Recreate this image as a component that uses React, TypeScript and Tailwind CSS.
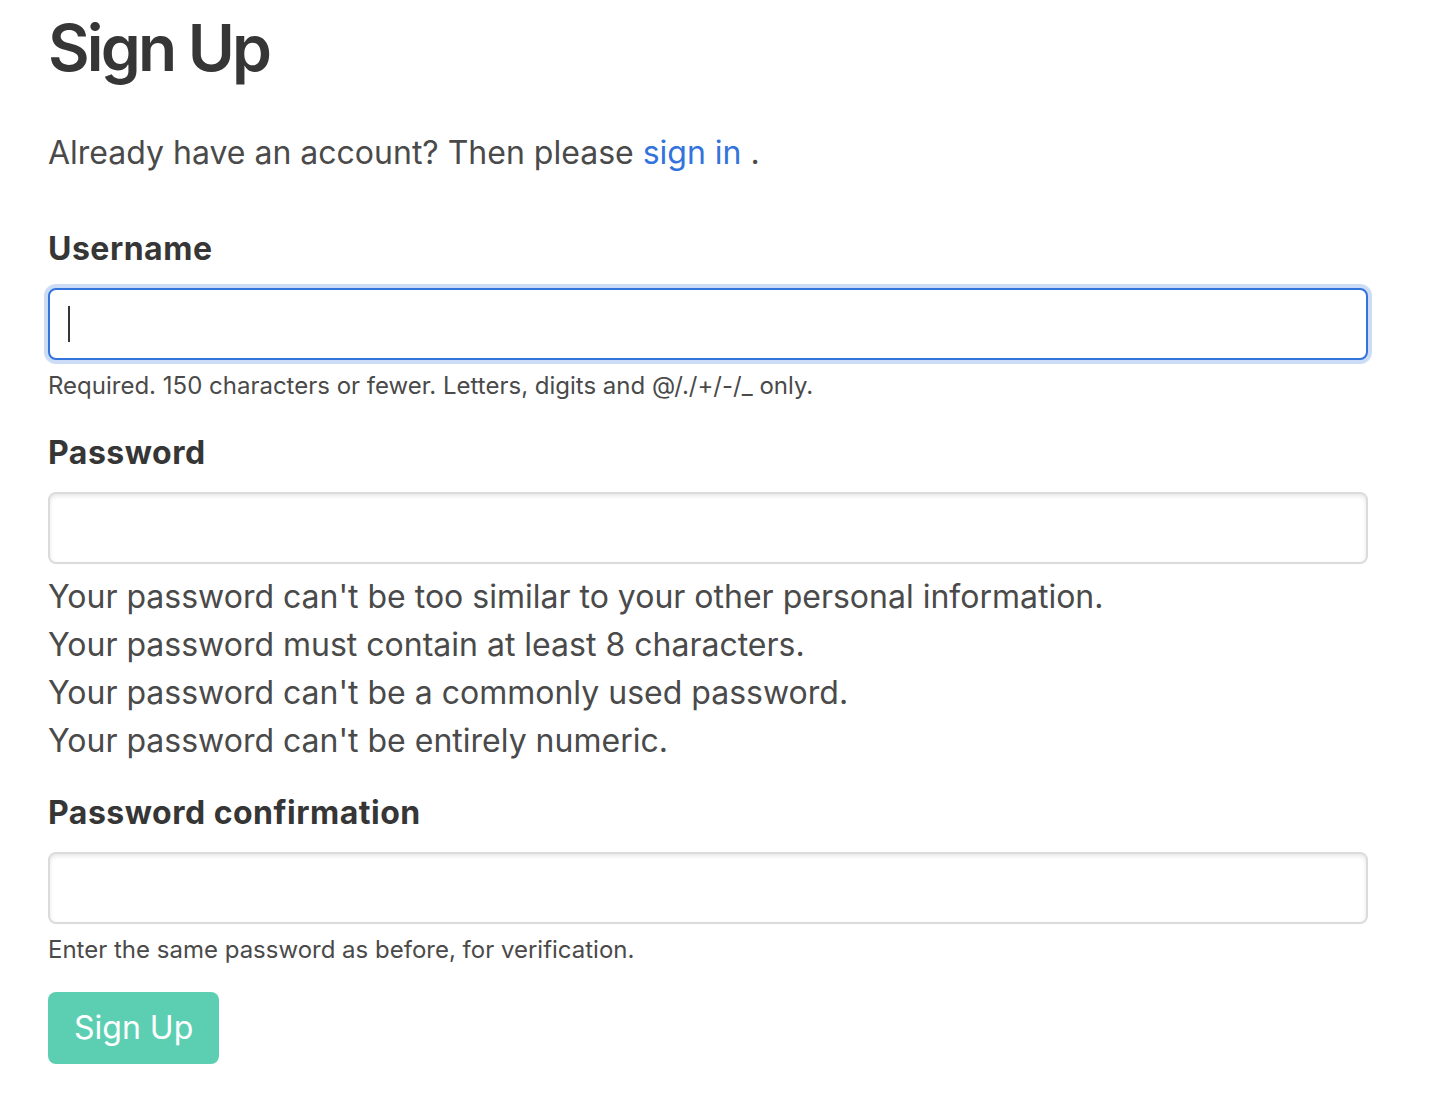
import React from 'react';

const PASSWORD_RULES = [
  "Your password can't be too similar to your other personal information.",
  'Your password must contain at least 8 characters.',
  "Your password can't be a commonly used password.",
  "Your password can't be entirely numeric.",
];

function Field({
  label,
  focused = false,
  type = 'text',
  className = '',
}: {
  label: string;
  focused?: boolean;
  type?: string;
  className?: string;
}) {
  return (
    <div className={className}>
      <label className="block text-[32px] leading-[48px] font-bold tracking-[0.5px] text-[#363636]">{label}</label>
      <div className="relative mt-[15px]">
        <input
          type={type}
          className={
            focused
              ? 'block w-full h-[72px] px-[18px] rounded-[8px] border-2 border-[#3273dc] bg-white outline-none shadow-[0_0_0_4px_rgba(50,115,220,0.25)] text-[32px] text-[#363636]'
              : 'block w-full h-[72px] px-[18px] rounded-[8px] border-2 border-[#dbdbdb] bg-white outline-none shadow-[inset_0_2px_4px_rgba(10,10,10,0.1)] text-[32px] text-[#363636]'
          }
        />
        {focused && (
          <span className="absolute left-[20px] top-[18px] w-[2px] h-[36px] bg-[#363636]" />
        )}
      </div>
    </div>
  );
}

export default function App() {
  return (
    <div className="min-h-screen bg-white font-['Inter','Noto_Sans',sans-serif] text-[#4a4a4a]">
      <div className="w-[1368px] pl-[48px] pt-[12px] pb-[52px]">
        <h1 className="text-[64px] leading-[72px] font-semibold text-[#363636] tracking-[-2.8px]">Sign Up</h1>

        <p className="mt-[45px] text-[32px] leading-[48px]">
          Already have an account? Then please{' '}
          <a href="#" className="text-[#3273dc]">sign in</a> .
        </p>

        <Field label="Username" focused className="mt-[48px]" />
        <p className="mt-[8px] text-[24px] leading-[36px]">
          Required. 150 characters or fewer. Letters, digits and @/./+/-/_ only.
        </p>

        <Field label="Password" type="password" className="mt-[25px]" />
        <ul className="mt-[9px] text-[32px] leading-[48px]">
          {PASSWORD_RULES.map((rule) => (
            <li key={rule}>{rule}</li>
          ))}
        </ul>

        <Field label="Password confirmation" type="password" className="mt-[24px]" />
        <p className="mt-[8px] text-[24px] leading-[36px]">Enter the same password as before, for verification.</p>

        <button className="mt-[24px] h-[72px] px-[26px] rounded-[8px] bg-[#5ccfb3] text-white text-[32px] leading-[48px]">
          Sign Up
        </button>
      </div>
    </div>
  );
}
